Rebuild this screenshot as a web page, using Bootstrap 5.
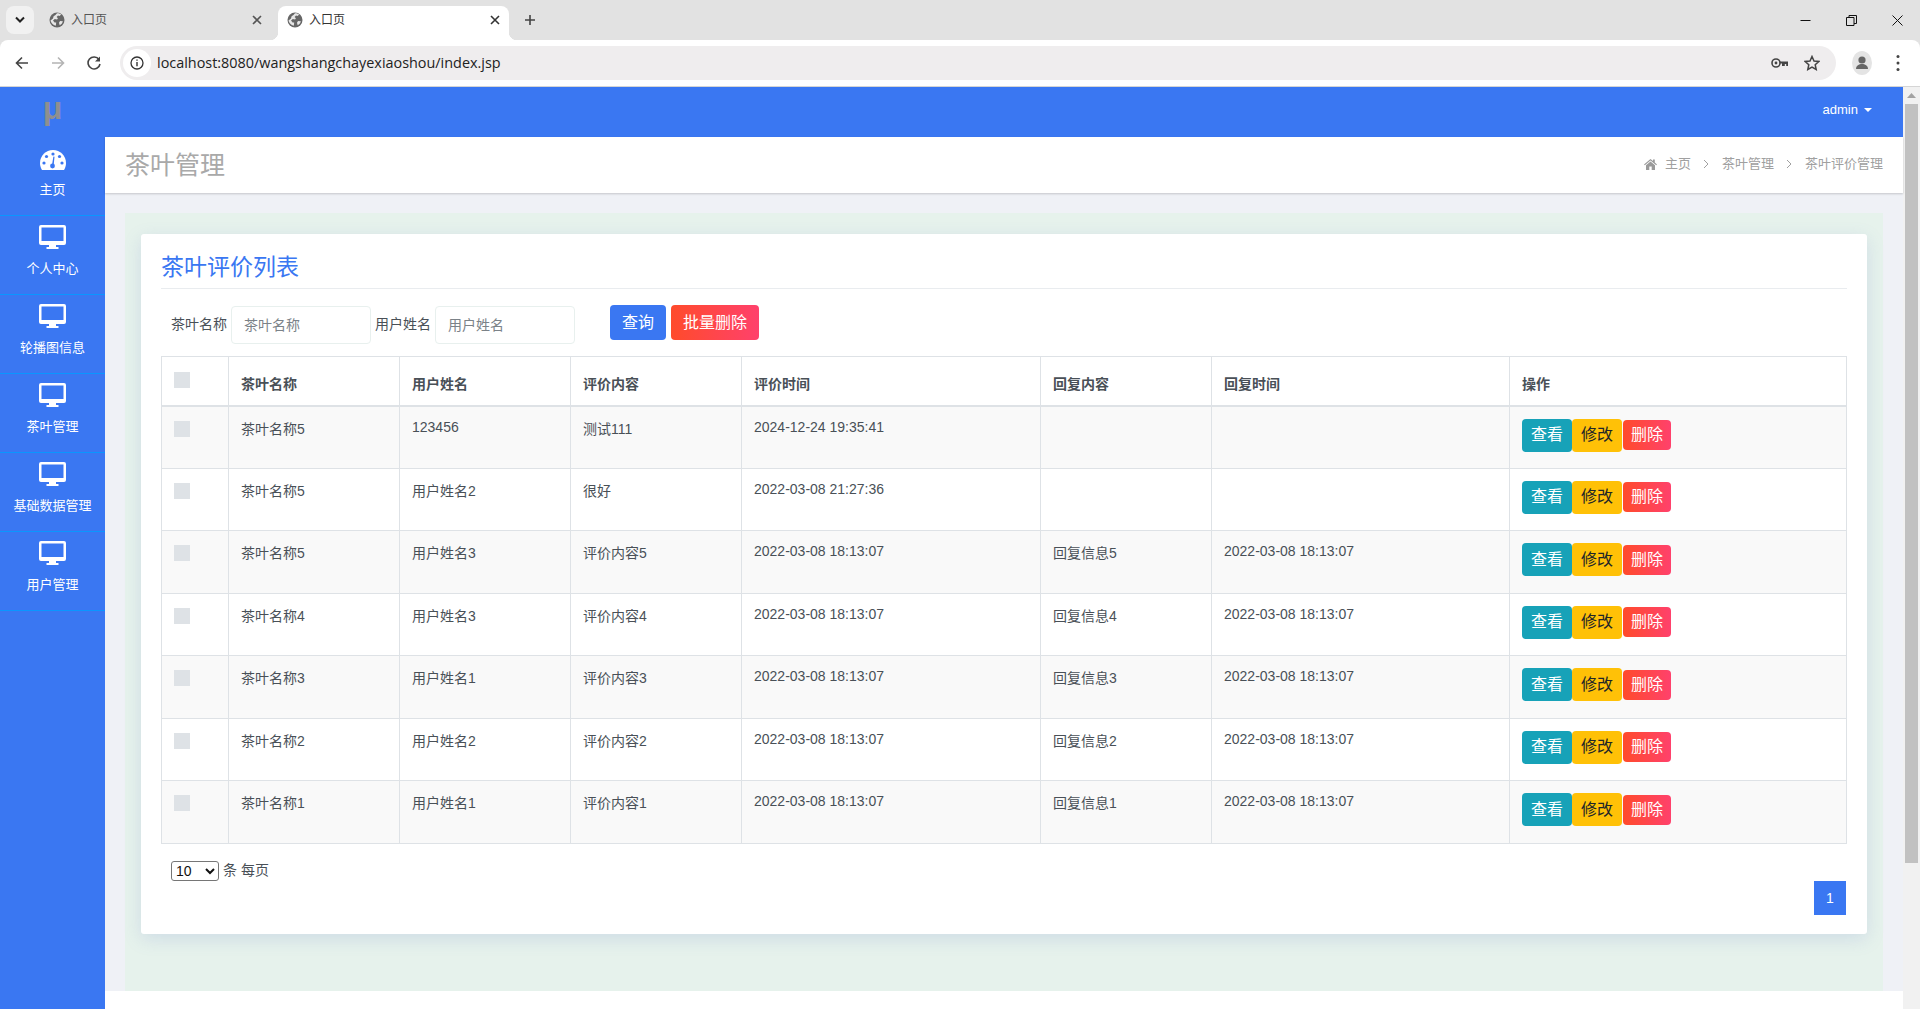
<!DOCTYPE html>
<html lang="zh-CN">
<head>
    <meta charset="UTF-8">
    <meta name="viewport" content="width=device-width, initial-scale=1.0">
    <title>入口页</title>
    <link href="https://cdn.jsdelivr.net/npm/bootstrap@5.3.0/dist/css/bootstrap.min.css" rel="stylesheet">
    <style>
        html, body { height: 100%; overflow: hidden; }
        body {
            font-family: "Liberation Sans", "Noto Sans CJK SC", sans-serif;
            font-size: 14px;
            color: #495057;
            background: #fff;
        }
        .app-frame { height: 1009px; }

        /* browser chrome */
        .tabstrip { height: 40px; background: #e2e2e2; padding-left: 6px; }
        .tab-menu { width: 28px; height: 28px; margin: 6px 6px 0 0; border-radius: 8px; background: #f1f1f1; }
        .tab-item { width: 231px; height: 34px; margin: 6px 7px 0 0; padding: 0 9px 6px; font-size: 12px; color: #555; border-radius: 8px 8px 0 0; position: relative; }
        .tab-item.is-active { background: #fff; color: #333; }
        .tab-item.is-active::before, .tab-item.is-active::after { content: ""; position: absolute; bottom: 0; width: 8px; height: 8px; }
        .tab-item.is-active::before { left: -8px; background: radial-gradient(circle at 0 0, #e2e2e2 8px, #fff 8.5px); }
        .tab-item.is-active::after { right: -8px; background: radial-gradient(circle at 100% 0, #e2e2e2 8px, #fff 8.5px); }
        .tab-title { margin-left: 6px; }
        .tab-plus { margin: 6px 0 0; width: 28px; height: 28px; }
        .win-btn { width: 46px; height: 40px; }
        .toolbar { height: 47px; background: #e2e2e2; }
        .toolbar-inner { height: 47px; background: #fff; border-radius: 8px 8px 0 0; border-bottom: 1px solid #d5d5d5; padding-left: 4px; }
        .tool-btn { width: 36px; height: 36px; }
        .omnibox { width: 1716px; height: 34px; margin-left: 8px; padding: 0 8px 0 3px; border-radius: 17px; background: #efedee; }
        .omni-info { width: 28px; height: 28px; border-radius: 50%; background: #fff; }
        .omni-url { margin-left: 6px; font-family: "Open Sans", "Liberation Sans", sans-serif; font-size: 14.4px; color: #222; }
        .omni-action { width: 32px; height: 32px; }

        /* page */
        .side-menu { width: 105px; background: #3a77f2; color: #fff; }
        .side-logo { height: 50px; font-size: 32px; font-weight: 700; color: #8f8f8f; line-height: 42px; text-align: center; }
        .side-link { height: 79px; padding-top: 9px; border-bottom: 1px solid #0a96ff; }
        .side-icon { height: 24px; }
        .side-label { margin-top: 11px; font-size: 13px; line-height: 18px; color: #fff; }
        .page-col { min-width: 0; }
        .top-bar { height: 50px; background: #3a77f2; color: #fff; padding: 0 31px 6px 0; }
        .user-toggle { font-size: 13px; line-height: 1; }
        .user-toggle.dropdown-toggle::after { margin-left: 6px; vertical-align: 2px; border-top-width: 4px; border-right-width: 4px; border-left-width: 4px; }
        .page-head { height: 56px; background: #fff; padding: 0 20px; box-shadow: 0 1px 2px rgba(0, 0, 0, .18); position: relative; }
        .page-title { margin: 0; font-size: 25px; font-weight: 400; color: #a9a9a9; }
        .crumbs { font-size: 13px; color: #a0a0a0; padding-bottom: 2px; }
        .crumb-sep { margin: 0 12.5px; }
        .page-body { height: 798px; padding: 20px 20px 0; background: #eff1f6; }
        .green-panel { height: 778px; padding: 21px 16px 0; background: #e6f2ec; }
        .list-card { height: 700px; padding: 20px 20px 0; background: #fff; border-radius: 3px; border: 0; box-shadow: 0 5px 18px rgba(100, 120, 200, .18); }
        .list-head { height: 35px; border-bottom: 1px solid #e9ecef; }
        .list-title { margin: -1px 0 0; font-size: 23px; line-height: 28px; font-weight: 400; color: #3a77f2; }
        .search-row { height: 39px; margin-top: 16px; padding-left: 10px; }
        .search-input { width: 140px; height: 38px; margin: 1px 4px 0; padding: 0 12px; font-size: 14px; color: #495057; border: 1px solid #e8f0ee; border-radius: 4px; }
        .search-input::placeholder { color: #7b8288; }
        .act-btn { height: 35px; padding: 0 12px; font-size: 16px; line-height: 1; color: #fff; border: 0; border-radius: 4px; }
        .act-query { margin-left: 31px; background: #3a77f2; }
        .act-query:hover { background: #3a77f2; color: #fff; }
        .act-batch { margin-left: 5px; background: linear-gradient(90deg, #ff4b2b, #ff416c); }
        .review-table {
            --bs-table-border-color: #dee2e6;
            --bs-table-striped-bg: #f9f9f9;
            --bs-table-color: #495057;
            --bs-table-striped-color: #495057;
            table-layout: fixed;
            width: 1686px;
            margin: 12px 0 0;
            font-size: 14px;
            line-height: 21px;
        }
        .review-table th { height: 49px; padding: 12px 12px 10px; vertical-align: bottom; font-weight: 700; border-bottom-width: 2px; }
        .review-table th.head-check { vertical-align: top; padding-top: 15px; }
        .review-table td { height: 62.5px; padding: 12px; vertical-align: top; }
        .review-table td.latin-cell { padding-top: 10px; }
        .col-check { width: 67px; }
        .col-name { width: 171px; }
        .col-time { width: 299px; }
        .col-reply { width: 171px; }
        .col-reply-time { width: 298px; }
        .check-box { display: block; width: 16px; height: 16px; background: #dee2e6; }
        td .check-box { margin-top: 2px; }
        .row-btn { height: 33px; padding: 0 9px; font-size: 16px; line-height: 1; border: 0; border-radius: 4px; }
        .row-view { background: #17a2b8; color: #fff; }
        .row-edit { background: #ffc107; color: #212529; }
        .row-del { height: 30px; margin-left: 1px; padding: 0 8px; color: #fff; background: linear-gradient(90deg, #ff4b2b, #ff416c); }
        .page-size { margin: 17px 0 0 10px; height: 20px; }
        .page-size select { width: 48px; height: 20px; margin-right: 4px; padding: 0; font-size: 14px; color: #111; background: #fff; border: 1px solid #767676; border-radius: 3px; }
        .pager { margin: 0 1px 0 0; }
        .pager .page-item .page-link { width: 32px; height: 34px; padding: 0; line-height: 34px; text-align: center; font-size: 14px; color: #fff; background: #3a77f2; border: 0; border-radius: 0; }
        .page-foot { height: 18px; background: #fff; }
        .fake-scroll { width: 17px; background: #f1f1f1; padding: 0 2px; }
        .scroll-arrow { height: 17px; }
        .scroll-thumb { width: 13px; height: 759px; background: #c1c1c1; }
    </style>
</head>
<body>
    <svg width="0" height="0" class="position-absolute">
        <symbol id="i-globe" viewBox="0 0 16 16">
            <circle cx="8" cy="8" r="7.500" fill="#666"/>
            <path fill="#e6e6e6" d="M8 1.200c1.600 0 3 .5 4.200 1.400L10.500 4 9 3.600 7.600 5l1.300 1.300-.8 1.200-2.300-.6L4 8.400l1.600 2.100 1.600.1-.4 3.200C4 13 2 11 1.500 8.600L4 6.600l.6-2.300L6.500 3z"/>
            <path fill="#e6e6e6" d="M11 9l2.900.3c-.5 1.800-1.700 3.200-3.200 4L10 10.800z"/>
        </symbol>
        <symbol id="i-desktop" viewBox="0 0 27 24">
            <path fill="#fff" fill-rule="evenodd" d="M2 0h23a2 2 0 0 1 2 2v16a2 2 0 0 1-2 2h-8v2h2.500v2H7.500v-2H10v-2H2a2 2 0 0 1-2-2V2a2 2 0 0 1 2-2zM2.500 2.500v13.500h22V2.500z"/>
        </symbol>
        <symbol id="i-gauge" viewBox="0 0 26 20">
            <path fill="#fff" d="M13 0C5.800 0 0 5.800 0 13c0 2.600.8 5 2 7h22c1.200-2 2-4.400 2-7C26 5.800 20.200 0 13 0z"/>
            <g fill="#3a77f2">
                <circle cx="13" cy="4" r="1.600"/><circle cx="6.500" cy="6.500" r="1.600"/><circle cx="19.500" cy="6.500" r="1.600"/>
                <circle cx="4" cy="13" r="1.600"/><circle cx="22" cy="13" r="1.600"/><circle cx="12.500" cy="16" r="2.400"/>
                <path d="M12 15l1.400-8.500 1.100.2-.8 8.500z"/>
            </g>
        </symbol>
    </svg>

    <div class="app-frame d-flex flex-column">
        <div class="tabstrip d-flex flex-shrink-0">
            <div class="tab-menu d-flex align-items-center justify-content-center">
                <svg width="12" height="8" viewBox="0 0 12 8"><path d="M2 1.500l4 4 4-4" fill="none" stroke="#222" stroke-width="2"/></svg>
            </div>
            <div class="tab-item d-flex align-items-center">
                <svg width="16" height="16"><use href="#i-globe"/></svg>
                <span class="tab-title">入口页</span>
                <svg class="ms-auto" width="10" height="10" viewBox="0 0 10 10"><path d="M1 1l8 8M9 1l-8 8" stroke="#555" stroke-width="1.600"/></svg>
            </div>
            <div class="tab-item is-active d-flex align-items-center">
                <svg width="16" height="16"><use href="#i-globe"/></svg>
                <span class="tab-title">入口页</span>
                <svg class="ms-auto" width="10" height="10" viewBox="0 0 10 10"><path d="M1 1l8 8M9 1l-8 8" stroke="#333" stroke-width="1.600"/></svg>
            </div>
            <div class="tab-plus d-flex align-items-center justify-content-center">
                <svg width="12" height="12" viewBox="0 0 12 12"><path d="M6 1v10M1 6h10" stroke="#444" stroke-width="1.600"/></svg>
            </div>
            <div class="ms-auto d-flex">
                <div class="win-btn d-flex align-items-center justify-content-center">
                    <svg width="11" height="11" viewBox="0 0 11 11"><path d="M.500 5.500h10" stroke="#111"/></svg>
                </div>
                <div class="win-btn d-flex align-items-center justify-content-center">
                    <svg width="11" height="11" viewBox="0 0 11 11"><path d="M.500 2.500h7.500v8H.500zM3 2.500V.500h7.500v8H8" fill="none" stroke="#111"/></svg>
                </div>
                <div class="win-btn d-flex align-items-center justify-content-center">
                    <svg width="11" height="11" viewBox="0 0 11 11"><path d="M.500.500l10 10M10.500.500l-10 10" stroke="#111"/></svg>
                </div>
            </div>
        </div>
        <div class="toolbar flex-shrink-0">
            <div class="toolbar-inner d-flex align-items-center">
                <div class="tool-btn d-flex align-items-center justify-content-center">
                    <svg width="14" height="14" viewBox="0 0 14 14"><path d="M13 7H2M7 1.500L1.500 7 7 12.500" fill="none" stroke="#444" stroke-width="1.600"/></svg>
                </div>
                <div class="tool-btn d-flex align-items-center justify-content-center">
                    <svg width="14" height="14" viewBox="0 0 14 14"><path d="M1 7h11M7 1.500L12.500 7 7 12.500" fill="none" stroke="#b4b4b4" stroke-width="1.600"/></svg>
                </div>
                <div class="tool-btn d-flex align-items-center justify-content-center">
                    <svg width="14" height="14" viewBox="0 0 14 14"><path d="M12 3.500A6 6 0 1 0 13 8" fill="none" stroke="#444" stroke-width="1.600"/><path d="M13 .500v5H8z" fill="#444"/></svg>
                </div>
                <div class="omnibox d-flex align-items-center">
                    <div class="omni-info d-flex align-items-center justify-content-center">
                        <svg width="14" height="14" viewBox="0 0 14 14"><circle cx="7" cy="7" r="6" fill="none" stroke="#333" stroke-width="1.300"/><path d="M7 6v4.200M7 3.500v1.300" stroke="#333" stroke-width="1.400"/></svg>
                    </div>
                    <span class="omni-url">localhost:8080/wangshangchayexiaoshou/index.jsp</span>
                    <div class="omni-action ms-auto d-flex align-items-center justify-content-center">
                        <svg width="18" height="12" viewBox="0 0 18 12"><circle cx="5" cy="6" r="4" fill="none" stroke="#444" stroke-width="1.600"/><circle cx="5" cy="6" r="1.400" fill="#444"/><path d="M9 4.500h8v4.500h-1.800V7h-1.400v2H11V6.500H9z" fill="#444"/></svg>
                    </div>
                    <div class="omni-action d-flex align-items-center justify-content-center">
                        <svg width="16" height="16" viewBox="0 0 16 16"><path d="M8 1.500l2 4.500 4.800.5-3.600 3.200 1 4.800L8 12.100l-4.200 2.400 1-4.800L1.200 6.500 6 6z" fill="none" stroke="#444" stroke-width="1.500"/></svg>
                    </div>
                </div>
                <div class="ms-2 d-flex align-items-center justify-content-center tool-btn">
                    <svg width="20" height="24" viewBox="0 0 20 24"><ellipse cx="10" cy="12" rx="10" ry="12" fill="#e4e4e4"/><circle cx="10" cy="9" r="3.600" fill="#666"/><path d="M4 18c0-3.500 3-5 6-5s6 1.500 6 5z" fill="#666"/></svg>
                </div>
                <div class="tool-btn d-flex align-items-center justify-content-center">
                    <svg width="4" height="18" viewBox="0 0 4 18"><circle cx="2" cy="2.500" r="1.500" fill="#444"/><circle cx="2" cy="9" r="1.500" fill="#444"/><circle cx="2" cy="15.500" r="1.500" fill="#444"/></svg>
                </div>
            </div>
        </div>

        <div class="d-flex flex-grow-1 overflow-hidden">
            <aside class="side-menu flex-shrink-0">
                <div class="side-logo">μ</div>
                <div id="side-links"></div>
            </aside>

            <div class="page-col flex-grow-1 d-flex flex-column">
                <div class="top-bar d-flex align-items-center justify-content-end flex-shrink-0">
                    <span class="user-toggle dropdown-toggle">admin</span>
                </div>
                <div class="page-head d-flex align-items-center justify-content-between flex-shrink-0">
                    <h1 class="page-title">茶叶管理</h1>
                    <div class="crumbs d-flex align-items-center">
                        <svg class="me-2" width="13" height="12" viewBox="0 0 13 12"><path fill="#9a9a9a" d="M6.500 1L0 6.500l.8.8 5.700-4.700 5.700 4.700.8-.8-2.200-1.900V1.500H9v1.400zM2 7.300V12h3.300V8.600h2.400V12H11V7.300L6.500 3.600z"/></svg>
                        <span>主页</span>
                        <svg class="crumb-sep" width="6" height="10" viewBox="0 0 6 10"><path d="M1 1l4 4-4 4" fill="none" stroke="#a0a0a0"/></svg>
                        <span>茶叶管理</span>
                        <svg class="crumb-sep" width="6" height="10" viewBox="0 0 6 10"><path d="M1 1l4 4-4 4" fill="none" stroke="#a0a0a0"/></svg>
                        <span>茶叶评价管理</span>
                    </div>
                </div>
                <main class="page-body flex-shrink-0">
                    <div class="green-panel">
                        <div class="card list-card">
                            <div class="list-head d-flex align-items-start">
                                <h2 class="list-title">茶叶评价列表</h2>
                            </div>
                            <form class="search-row d-flex align-items-center">
                                <label for="tea-name">茶叶名称</label>
                                <input id="tea-name" class="search-input" type="text" placeholder="茶叶名称">
                                <label for="user-name">用户姓名</label>
                                <input id="user-name" class="search-input" type="text" placeholder="用户姓名">
                                <button type="button" class="btn act-btn act-query align-self-start">查询</button>
                                <button type="button" class="btn act-btn act-batch align-self-start">批量删除</button>
                            </form>
                            <table class="table table-bordered table-striped review-table">
                                <colgroup>
                                    <col class="col-check"><col class="col-name"><col class="col-name"><col class="col-name">
                                    <col class="col-time"><col class="col-reply"><col class="col-reply-time"><col>
                                </colgroup>
                                <thead>
                                    <tr>
                                        <th class="head-check"><span class="check-box"></span></th>
                                        <th>茶叶名称</th><th>用户姓名</th><th>评价内容</th><th>评价时间</th><th>回复内容</th><th>回复时间</th><th>操作</th>
                                    </tr>
                                </thead>
                                <tbody id="review-rows"></tbody>
                            </table>
                            <div class="page-size d-flex align-items-center">
                                <select aria-label="每页条数"><option>10</option><option>20</option><option>50</option></select>
                                <span>条 每页</span>
                            </div>
                            <ul class="pagination pager justify-content-end">
                                <li class="page-item active"><a class="page-link" href="#">1</a></li>
                            </ul>
                        </div>
                    </div>
                </main>
                <footer class="page-foot flex-shrink-0"></footer>
            </div>

            <div class="fake-scroll flex-shrink-0">
                <div class="scroll-arrow d-flex align-items-center justify-content-center">
                    <svg width="9" height="5" viewBox="0 0 9 5"><path d="M4.500 0L9 5H0z" fill="#a3a3a3"/></svg>
                </div>
                <div class="scroll-thumb"></div>
            </div>
        </div>
    </div>

    <script src="https://cdn.jsdelivr.net/npm/bootstrap@5.3.0/dist/js/bootstrap.bundle.min.js"></script>
    <script>
        const sideItems = [
            { label: '主页', icon: 'gauge', w: 26, h: 20 },
            { label: '个人中心', icon: 'desktop', w: 27, h: 24 },
            { label: '轮播图信息', icon: 'desktop', w: 27, h: 24 },
            { label: '茶叶管理', icon: 'desktop', w: 27, h: 24 },
            { label: '基础数据管理', icon: 'desktop', w: 27, h: 24 },
            { label: '用户管理', icon: 'desktop', w: 27, h: 24 }
        ];

        const reviews = [
            ['茶叶名称5', '123456', '测试111', '2024-12-24 19:35:41', '', ''],
            ['茶叶名称5', '用户姓名2', '很好', '2022-03-08 21:27:36', '', ''],
            ['茶叶名称5', '用户姓名3', '评价内容5', '2022-03-08 18:13:07', '回复信息5', '2022-03-08 18:13:07'],
            ['茶叶名称4', '用户姓名3', '评价内容4', '2022-03-08 18:13:07', '回复信息4', '2022-03-08 18:13:07'],
            ['茶叶名称3', '用户姓名1', '评价内容3', '2022-03-08 18:13:07', '回复信息3', '2022-03-08 18:13:07'],
            ['茶叶名称2', '用户姓名2', '评价内容2', '2022-03-08 18:13:07', '回复信息2', '2022-03-08 18:13:07'],
            ['茶叶名称1', '用户姓名1', '评价内容1', '2022-03-08 18:13:07', '回复信息1', '2022-03-08 18:13:07']
        ];

        // cells with only digits sit a little higher than the Chinese ones
        const cellClass = value => /^[\d\s:-]+$/.test(value) ? ' class="latin-cell"' : '';

        document.getElementById('side-links').innerHTML = sideItems.map(item => `
            <div class="side-link d-flex flex-column align-items-center">
                <div class="side-icon d-flex align-items-end">
                    <svg width="${item.w}" height="${item.h}"><use href="#i-${item.icon}"/></svg>
                </div>
                <div class="side-label">${item.label}</div>
            </div>`).join('');

        document.getElementById('review-rows').innerHTML = reviews.map(row => `
            <tr>
                <td><span class="check-box"></span></td>
                ${row.map(value => `<td${cellClass(value)}>${value}</td>`).join('')}
                <td>
                    <div class="d-flex align-items-center">
                        <button type="button" class="btn row-btn row-view">查看</button>
                        <button type="button" class="btn row-btn row-edit">修改</button>
                        <button type="button" class="btn row-btn row-del">删除</button>
                    </div>
                </td>
            </tr>`).join('');
    </script>
</body>
</html>
